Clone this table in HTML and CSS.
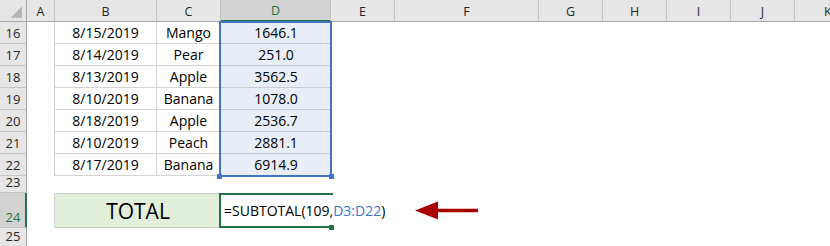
FILE: index.html
```html
<!DOCTYPE html>
<html>
<head>
<meta charset="utf-8">
<link rel="stylesheet" href="styles.css">
</head>
<body>
<div class="sheet">
  <!-- header row -->
  <div class="hd corner"><svg width="27" height="22" viewBox="0 0 27 22"><polygon points="23,6 23,18 11,18" fill="#b4b4b4"/></svg></div>
  <div class="hd">A</div>
  <div class="hd">B</div>
  <div class="hd">C</div>
  <div class="hd sel">D</div>
  <div class="hd">E</div>
  <div class="hd">F</div>
  <div class="hd">G</div>
  <div class="hd">H</div>
  <div class="hd">I</div>
  <div class="hd">J</div>
  <div class="hd last">K</div>

  <!-- row 16 -->
  <div class="rh">16</div><div class="c edge"></div><div class="t">8/15/2019</div><div class="t">Mango</div>
  <div class="dblock">
    <div class="dc">1646.1</div>
    <div class="dc">251.0</div>
    <div class="dc">3562.5</div>
    <div class="dc">1078.0</div>
    <div class="dc">2536.7</div>
    <div class="dc">2881.1</div>
    <div class="dc">6914.9</div>
    <span class="hdl hdl-l"></span><span class="hdl hdl-r"></span>
  </div>
  <div class="c"></div><div class="c"></div><div class="c"></div><div class="c"></div><div class="c"></div><div class="c"></div><div class="c"></div>

  <div class="rh">17</div><div class="c edge"></div><div class="t">8/14/2019</div><div class="t">Pear</div>
  <div class="c"></div><div class="c"></div><div class="c"></div><div class="c"></div><div class="c"></div><div class="c"></div><div class="c"></div>

  <div class="rh">18</div><div class="c edge"></div><div class="t">8/13/2019</div><div class="t">Apple</div>
  <div class="c"></div><div class="c"></div><div class="c"></div><div class="c"></div><div class="c"></div><div class="c"></div><div class="c"></div>

  <div class="rh">19</div><div class="c edge"></div><div class="t">8/10/2019</div><div class="t">Banana</div>
  <div class="c"></div><div class="c"></div><div class="c"></div><div class="c"></div><div class="c"></div><div class="c"></div><div class="c"></div>

  <div class="rh">20</div><div class="c edge"></div><div class="t">8/18/2019</div><div class="t">Apple</div>
  <div class="c"></div><div class="c"></div><div class="c"></div><div class="c"></div><div class="c"></div><div class="c"></div><div class="c"></div>

  <div class="rh">21</div><div class="c edge"></div><div class="t">8/10/2019</div><div class="t">Peach</div>
  <div class="c"></div><div class="c"></div><div class="c"></div><div class="c"></div><div class="c"></div><div class="c"></div><div class="c"></div>

  <div class="rh">22</div><div class="c edge"></div><div class="t">8/17/2019</div><div class="t">Banana</div>
  <div class="c"></div><div class="c"></div><div class="c"></div><div class="c"></div><div class="c"></div><div class="c"></div><div class="c"></div>

  <!-- row 23 -->
  <div class="rh">23</div><div class="c"></div><div class="c"></div><div class="c"></div><div class="c"></div><div class="c"></div><div class="c"></div><div class="c"></div><div class="c"></div><div class="c"></div><div class="c"></div><div class="c"></div>

  <!-- row 24 -->
  <div class="rh sel">24</div><div class="c edge"></div>
  <div class="total">TOTAL</div>
  <div class="edit"><span class="fx">=SUBTOTAL(109,<span class="ref">D3:D22</span>)</span><span class="caret"></span><span class="ehdl"></span></div>
  <div class="c"></div>
  <div class="c arrowcell"><svg width="66" height="22" viewBox="0 0 66 22"><polygon points="1,10.5 24,1.5 24,8.7 64,8.7 64,12.3 24,12.3 24,19.5" fill="#a80000"/></svg></div>
  <div class="c"></div><div class="c"></div><div class="c"></div><div class="c"></div><div class="c"></div>

  <!-- row 25 -->
  <div class="rh">25</div><div class="c"></div><div class="c"></div><div class="c"></div><div class="c"></div><div class="c"></div><div class="c"></div><div class="c"></div><div class="c"></div><div class="c"></div><div class="c"></div><div class="c"></div>
</div>
</body>
</html>
```

FILE: styles.css
```css
html, body {
  margin: 0;
  padding: 0;
  background: #ffffff;
  overflow: hidden;
}

.sheet {
  width: 830px;
  height: 246px;
  display: grid;
  grid-template-columns: 27px 28px 102px 64px 110px 64px 144px 64px 64px 64px 64px 1fr;
  grid-template-rows: 22px repeat(7, 22px) 17px 35px 1fr;
  font-family: "Open Sans", "Liberation Sans", sans-serif;
  font-size: 14px;
  color: #000;
}

.sheet > div {
  box-sizing: border-box;
  min-width: 0;
}

.hd {
  background: #e6e6e6;
  border-right: 1px solid #c4c4c4;
  border-bottom: 1px solid #a8a8a8;
  font-size: 12.5px;
  color: #262626;
  display: flex;
  align-items: center;
  justify-content: center;
  padding-top: 1px;
}

.hd.last {
  border-right: none;
  justify-content: flex-start;
  padding-left: 29px;
}

.hd.sel {
  background: #d2d2d2;
  color: #217346;
  border-bottom: 2px solid #217346;
}

.corner {
  padding: 0 !important;
  border-right: 1px solid #a8a8a8 !important;
  overflow: hidden;
}

.corner svg {
  display: block;
}

.rh {
  background: #e6e6e6;
  border-right: 1px solid #a8a8a8;
  border-bottom: 1px solid #c4c4c4;
  font-size: 13px;
  color: #262626;
  display: flex;
  align-items: flex-end;
  justify-content: center;
  padding-bottom: 2px;
  line-height: 16px;
}

.rh.sel {
  background: #d2d2d2;
  color: #217346;
  border-right: 2px solid #217346;
  padding-left: 1px;
}

.edge {
  border-right: 1px solid #d4d4d4;
}

.t {
  border-right: 1px solid #d4d4d4;
  border-bottom: 1px solid #d4d4d4;
  display: flex;
  align-items: center;
  justify-content: center;
  white-space: nowrap;
}

.dblock {
  grid-row: span 7;
  position: relative;
  display: flex;
  flex-direction: column;
  background: #e8eef8;
}

.dblock::after {
  content: "";
  position: absolute;
  top: -1px;
  left: -2px;
  right: -1px;
  bottom: -1px;
  border: 2px solid #4472c4;
  pointer-events: none;
}

.dc {
  height: 22px;
  box-sizing: border-box;
  border-bottom: 1px solid #c8ccd4;
  display: flex;
  align-items: center;
  justify-content: center;
}

.hdl {
  position: absolute;
  width: 5px;
  height: 5px;
  background: #4472c4;
  bottom: -3px;
  z-index: 2;
}

.hdl-l { left: -4px; }
.hdl-r { right: -3px; }

.total {
  grid-column: span 2;
  background: #e2efda;
  border-top: 1px solid #c8c8c8;
  border-bottom: 1px solid #c8c8c8;
  display: flex;
  align-items: center;
  justify-content: center;
  font-size: 21px;
  padding-top: 1px;
}

.edit {
  position: relative;
  margin-left: -2px;
  margin-right: -2px;
  border-left: 2px solid #217346;
  border-top: 2px solid #217346;
  border-bottom: 2px solid #217346;
  background: #fff;
  display: flex;
  align-items: center;
  padding-left: 3px;
  white-space: nowrap;
  overflow: visible;
  z-index: 1;
}

.fx {
  letter-spacing: 0;
}

.ref {
  color: #3a78d6;
}

.caret {
  display: inline-block;
  width: 1px;
  height: 19px;
  background: #000;
  margin-left: 2px;
}

.ehdl {
  position: absolute;
  right: -1px;
  bottom: -4px;
  width: 5px;
  height: 5px;
  background: #217346;
}

.arrowcell {
  display: flex;
  align-items: center;
  padding-left: 19px;
  padding-top: 1px;
}

.arrowcell svg {
  display: block;
  flex: none;
}
```
